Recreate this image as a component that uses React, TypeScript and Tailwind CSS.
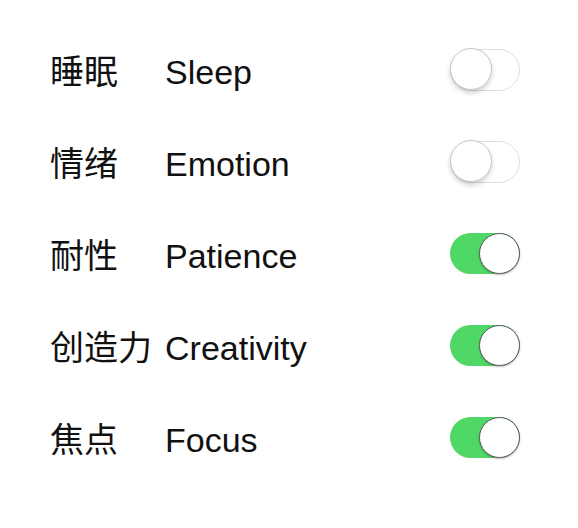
const items = [
  { zh: "睡眠", en: "Sleep", on: false },
  { zh: "情绪", en: "Emotion", on: false },
  { zh: "耐性", en: "Patience", on: true },
  { zh: "创造力", en: "Creativity", on: true },
  { zh: "焦点", en: "Focus", on: true },
];

function Toggle({ on }: { on: boolean }) {
  if (on) {
    return (
      <div className="relative w-[70px] h-[41px] rounded-full bg-[#4fd866]">
        <div className="absolute right-0 top-0 w-[41px] h-[41px] rounded-full bg-white border border-[#5a5a5a] shadow-[0_1px_2px_rgba(0,0,0,0.25)]" />
      </div>
    );
  }
  return (
    <div className="relative w-[70px] h-[42px] rounded-full bg-white border-[1.5px] border-[#dedede]">
      <div className="absolute -left-[1.5px] -top-[1.5px] w-[42px] h-[42px] rounded-full bg-white border border-[#c8c8c8] shadow-[0_3px_5px_rgba(0,0,0,0.18)]" />
    </div>
  );
}

export default function App() {
  return (
    <div className="w-[578px] h-[528px] bg-white pt-[26px] font-['Liberation_Sans','Noto_Sans_CJK_SC',sans-serif] text-[#111]">
      {items.map((item) => (
        <div key={item.en} className="flex items-center h-[92px] pl-[50px] pr-[58px]">
          <div className="w-[115px] text-[34px] leading-none">{item.zh}</div>
          <div className="flex-1 text-[34px] leading-none">{item.en}</div>
          <div className="-mt-[5px]">
            <Toggle on={item.on} />
          </div>
        </div>
      ))}
    </div>
  );
}
